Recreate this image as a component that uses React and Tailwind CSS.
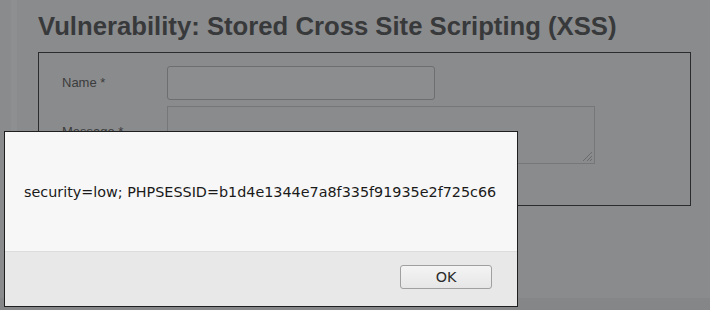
export default function App() {
  return (
    <div className="relative w-[710px] h-[310px] overflow-hidden bg-[#8a8b8c]" style={{ fontFamily: '"Liberation Sans", Arial, sans-serif' }}>
      <div className="absolute left-[11px] top-0 w-[6px] h-full bg-[#8e8f90]" />
      <div className="absolute left-0 bottom-0 w-full h-[12px] bg-[#858687]" />
      <div className="relative pl-[38px] pt-[9px] w-[691px]">
        <h1 className="text-[25.7px] leading-[34px] font-bold text-[#38393b]">
          Vulnerability: Stored Cross Site Scripting (XSS)
        </h1>
        <div className="mt-[9px] border border-[#2c2c2d] h-[154px] pl-[23px] pt-[13px]">
          <div className="flex items-center">
            <div className="w-[105px] text-[13px] text-[#3b3c3d]">Name *</div>
            <div className="w-[268px] h-[34px] rounded-[3px] border border-[#6d6e6f] bg-[#8c8d8e]" />
          </div>
          <div className="flex mt-[6px]">
            <div className="w-[105px] pt-[16px] text-[13px] text-[#3b3c3d]">Message *</div>
            <div className="relative w-[428px] h-[58px] border border-[#767778]">
              <svg className="absolute right-[1px] bottom-[1px]" width="12" height="12" viewBox="0 0 12 12">
                <path d="M11 2 L2 11 M11 6 L6 11 M11 9 L9 11" stroke="#6a6b6c" strokeWidth="1" />
              </svg>
            </div>
          </div>
        </div>
      </div>
      <div className="absolute left-[4px] top-[131px] w-[514px] h-[176px] border border-[#1f1f1f] bg-[#f7f7f7] flex flex-col" style={{ fontFamily: '"DejaVu Sans", sans-serif' }}>
        <div className="h-[119px] flex items-center pl-[19px] pt-[2px] text-[14.35px] text-[#1a1a1a]">
          security=low; PHPSESSID=b1d4e1344e7a8f335f91935e2f725c66
        </div>
        <div className="flex-1 border-t border-[#dcdcdc] bg-[#e8e8e8] flex justify-end items-start pt-[13px] pr-[25px]">
          <button className="w-[92px] h-[24px] rounded-[3px] border border-[#a0a0a0] bg-gradient-to-b from-[#f4f4f4] to-[#e6e6e6] text-[14.35px] text-[#2a2a2a] leading-none">
            OK
          </button>
        </div>
      </div>
    </div>
  );
}
